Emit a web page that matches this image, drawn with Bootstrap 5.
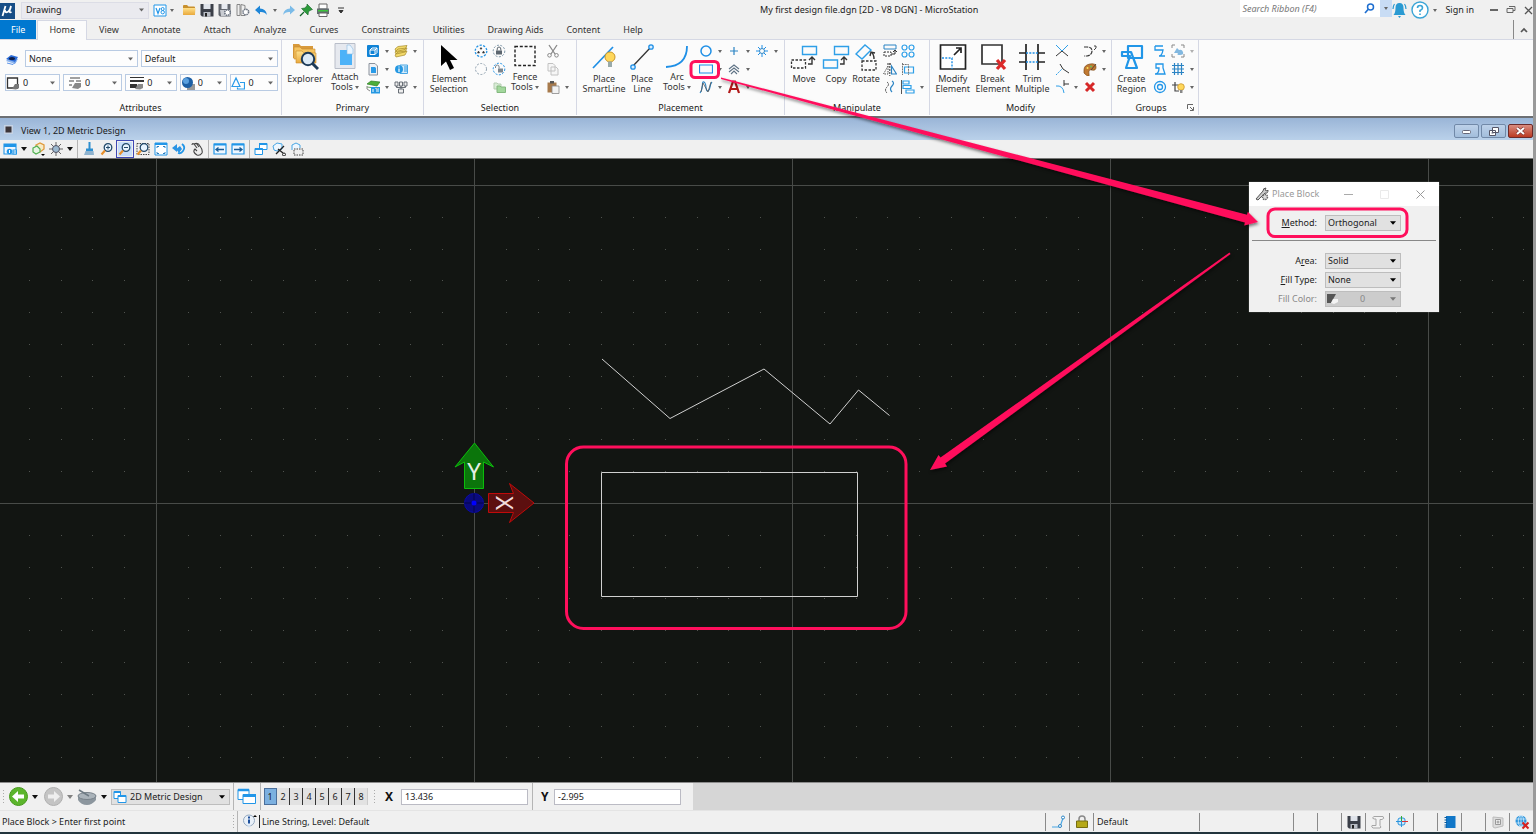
<!DOCTYPE html>
<html lang="en">
<head>
<meta charset="utf-8">
<meta name="viewport" content="width=device-width, initial-scale=1">
<title>My first design file.dgn [2D - V8 DGN] - MicroStation</title>
<link href="https://cdn.jsdelivr.net/npm/bootstrap@5.3.0/dist/css/bootstrap.min.css" rel="stylesheet">
<style>
:root{--line:#d5d8e4}
body{font:9px/10px "Noto Sans","Open Sans",sans-serif;color:#1c1c1c;background:#f0f0f0}
button,select,input{font:inherit;color:inherit;border-radius:0}
button{border:0;background:none;padding:0}
svg{display:block;flex:none;overflow:visible}
.ic{width:14px;height:14px}
.app{border-right:3px solid #9a9a9a;background:#f0f0f0}
.caret{display:inline-block;width:0;height:0;border:2px solid transparent;border-top:3px solid #666;border-bottom:0;vertical-align:middle}
.caret-lg{border-width:3px 3px 0;border-top:4px solid #111}
select{appearance:none;background:no-repeat right 4px center/5px 4px url("data:image/svg+xml,%3Csvg xmlns='http://www.w3.org/2000/svg' viewBox='0 0 5 4'%3E%3Cpath d='M0 .5h5L2.500 3.500z' fill='%23666'/%3E%3C/svg%3E");padding:0 10px 0 3px;border:1px solid #b9cbe3;min-width:0;outline:0}
select:disabled{opacity:1}
.near{margin-left:2px}.near3{margin-inline:3px}.near5{margin-inline:5px}
/* title bar */
.topbar{height:20px}
.topbar select{width:128px;height:17px;border:1px solid #dcdde6;background-color:#eaeaef;padding-left:4px;margin-left:6px}
.doc-title{padding-left:154px}
.find{width:140px;height:17px;background:#fff;margin-top:-3px}
.find input{border:0;background:none;width:124px;font-style:italic;outline:0;padding:0 2px}
.find input::placeholder{color:#777;opacity:1}
.find-drop{width:12px;height:17px;background:#c8dcf4;margin-top:-3px}
.sign{margin-right:12px}
/* tabs */
.tabs{height:20px;border-bottom:1px solid var(--line);gap:1px}
.tabs .nav-link{color:#333;font-size:9px;line-height:19px;height:19px;padding:0 11px;border-radius:0}
.tabs .file{background:#0078d0;color:#fff}
.tabs .active{background:#fbfbfb;border:1px solid var(--line);border-bottom:0;height:20px;line-height:18px}
.collapse-btn{width:20px;border-left:1px solid #888}
/* ribbon */
.ribbon{height:76px;background:#fbfbfb;border-bottom:1px solid #fff}
.grp{border-right:1px solid var(--line);padding:2px 0 1px;display:flex;flex-direction:column;justify-content:space-between}
.grp-label{height:12px;line-height:12px;position:relative}
.big{color:#333;text-align:center;align-self:flex-start;white-space:nowrap}
.big .art{height:32px;display:flex;align-items:center;justify-content:center;padding-bottom:2px}
.big .art svg{width:28px;height:28px}
.big.menu .art{height:30px}
.tg{display:grid;grid-auto-rows:18px;grid-auto-flow:row;place-items:center;height:54px}
.tg button{display:grid;place-items:center}
.c1{grid-template-columns:14px 14px}.c2{grid-template-columns:18px 18px}
.c4{grid-template-columns:repeat(4,14px)}.c6{grid-template-columns:repeat(6,14px)}
.c3{grid-template-columns:18px 17px 12px}
.w30{width:30px}.w34{width:34px}.w40{width:40px}.w46{width:46px}
.attr{padding:8px 3px 0 5px;gap:7px}
.attr select{height:17px;background-color:#fdfdfd}
.attr .tpl{flex:111 0 0;margin-left:3px}.attr .lvl{flex:139 0 0}
.row3{gap:3px}
.pair{border:1px solid #b9cbe3;height:17px;background:#fdfdfd;min-width:0;overflow:hidden}
.pair select{border:0;height:15px;background-color:transparent;width:20px}
.wide{flex:57 0 0}.slim{flex:49 0 0}
.launch{right:4px;top:2px}
/* view window */
.view-bar{height:24px;background:linear-gradient(#9ab5d7,#bad1ea);border-top:2px solid #6c6f73}
.win-btn{width:25px;height:14px;border:1px solid #7189a8;border-radius:2px;background:linear-gradient(#bdd1e9,#a2bddb);display:grid;place-items:center}
.win-btn.shut{background:linear-gradient(#d98d80,#bb3a22);border-color:#6b2a2a}
.view-tools{height:19px;border-bottom:1px solid #777;gap:4px;padding-left:3px}
.view-tools .on{background:#c7defa;outline:1px solid #3f48b5;outline-offset:1px}
.bar{width:1px;align-self:stretch;background:#b5b5b5}
.canvas{background:#121512;min-height:0}
.canvas > svg{width:100%;height:100%;position:absolute}
/* tool settings window */
.dlg{left:1249px;top:23px;width:190px;height:130px;background:#f0f0f0;box-shadow:0 0 1px #888}
.dlg-head{height:24px;background:#fff;color:#999;padding:0 14px 0 6px}
.dlg label{width:68px;text-align:right}
.dlg select,.gray-select{height:16px;width:76px;background-color:#e1e1e1;border:1px solid #bdbdbd;background-image:url("data:image/svg+xml,%3Csvg xmlns='http://www.w3.org/2000/svg' viewBox='0 0 7 4'%3E%3Cpath d='M0 0h7L3.500 4z' fill='%23000'/%3E%3C/svg%3E");background-size:6px 4px;padding-left:2px}
.dlg select:disabled{background-color:#ccc;color:#888;padding-left:34px;background-image:url("data:image/svg+xml,%3Csvg xmlns='http://www.w3.org/2000/svg' viewBox='0 0 7 4'%3E%3Cpath d='M0 0h7L3.500 4z' fill='%23777'/%3E%3C/svg%3E")}
.dlg hr{margin:0 3px 12px;border-color:#888;opacity:1}
.method{height:34px}
.dlg .off{color:#888}
.swatch{left:78px;top:3px}
/* bottom bars */
.nav-bar{height:28px;background:#d6d6d6;border-top:1px solid #8c8c8c}
.nav-part{background:#f0f0f0;height:27px}
.grip{width:3px;height:16px;background:radial-gradient(circle,#aaa 1px,transparent 1px) 0 0/3px 3px}
.nav-part .gray-select{width:119px;padding-left:18px}
.views{background:#e2e2e2;height:17px}
.views button{width:13px;border-right:1px solid #333}
.views button:last-child{border-right-color:#ccc}
.views .sel{background:#7cb0e0;outline:1px solid #4b6f9b;outline-offset:-1px}
.xy{font-size:12px;font-weight:700;color:#111;width:13px}
.nav-part input{width:127px;height:16px;border:1px solid #bbbbc4;background:#fff;padding:0 3px;outline:0}
.status{height:22px;border-top:1px solid #e4e4e4}
.prompt{width:232px;padding-left:2px}
.cell{width:24px;border-left:1px solid #8a8a8a;height:18px;display:grid;place-items:center}
.cell-level{width:106px;padding-left:3px;place-items:center start}
.cell-wide{width:94px}
.base{height:2px;background:#22343c;margin-right:-3px}
.marks{left:0;top:0;width:1536px;height:834px;pointer-events:none;z-index:5}
</style>
</head>
<body>
<svg width="0" height="0" class="position-absolute" aria-hidden="true"><defs>
<linearGradient id="gold" x2="0" y2="1"><stop stop-color="#ffe08a"/><stop offset="1" stop-color="#e9a93c"/></linearGradient>
<g id="lens"><circle cx="8" cy="5.500" r="3.800" fill="#e8f4ff" stroke="#234a6b" stroke-width="1.300"/><path d="M5 8.500 1.500 12.500" stroke="#e8902c" stroke-width="2.200"/></g>
<symbol id="floppy" viewBox="0 0 14 14"><path d="M.5 1h13v12.500H2L.5 12z" fill="#3b3f48"/><path d="M3.500 1h7v5h-7z" fill="#dfe3ea"/><path d="M3.500 9h7v4.500h-7z" fill="#b8bcc4"/><path d="M5 10h2v3.500H5z" fill="#222"/></symbol>
<symbol id="floppy-gear" viewBox="0 0 14 14"><path d="M.5 1h12v12.500H2L.5 12z" fill="#62666e"/><path d="M3.500 1h6v5h-6z" fill="#e7eaf0"/><path d="M2 7h10v6H3z" fill="#c9ccd2"/><circle cx="9.500" cy="9.500" r="2.800" fill="#fff" stroke="#6b7380" stroke-width="1.600" stroke-dasharray="1.500 .7"/></symbol>
<symbol id="docgear" viewBox="0 0 14 14"><path d="M1 1.500h3v11H1zM5 1.500l4 1v10H5z" fill="#eee" stroke="#888"/><circle cx="9.800" cy="9" r="2.800" fill="#fff" stroke="#6b7380" stroke-width="1.600" stroke-dasharray="1.500 .7"/></symbol>
<symbol id="folder" viewBox="0 0 14 14"><path d="M1 3q0-1 1-1h3l1.500 1.500H12q1 0 1 1V11q0 1-1 1H2q-1 0-1-1z" fill="#c8902e"/><path d="M1 5h12.500L13 11q0 1-1 1H2q-1 0-1-1z" fill="url(#gold)"/></symbol>
<symbol id="undo" viewBox="0 0 14 14"><path d="M1 7 6 2.500V5.500Q12 5.500 13 12 10.500 8.500 6 9v2.500z" fill="#1e86d8"/></symbol>
<symbol id="pin" viewBox="0 0 14 14"><path d="M8 1l5.500 5.500-1.500.5-2.500 1.500-.5 3.500L2.500 5.500 6 5 8 2.500z" fill="#2c9a3a" stroke="#14652a" stroke-width=".6"/><path d="M5 9 1 13" stroke="#14652a" stroke-width="1.300"/></symbol>
<symbol id="printer" viewBox="0 0 14 14"><path d="M3 1h8v5H3z" fill="#fff" stroke="#666"/><path d="M1 5.500h12V11H1z" fill="#636d70"/><path d="M2 7h10v1.500H2z" fill="#3cc43c"/><path d="M3 10h8v3.500H3z" fill="#fff" stroke="#666"/></symbol>
<symbol id="layers-blue" viewBox="0 0 14 14"><path d="M1 9l4-4 8 2-3 5z" fill="#8fb6ee"/><path d="M1 7l5-4 7 2-3 5z" fill="#2a6bd8"/><ellipse cx="7" cy="6.500" rx="3" ry="1.600" fill="#0e1e4a"/><path d="M2 11l6 1.500 3-3" fill="none" stroke="#5d94e8"/></symbol>
<symbol id="sq-hand" viewBox="0 0 14 14"><path d="M1.500 2h10v10h-10z" fill="#fff" stroke="#333" stroke-width="1.300"/><path d="M6 13l3-5h4v4l-3 1.500z" fill="#777"/></symbol>
<symbol id="lines-hand" viewBox="0 0 14 14"><path d="M2 2h10M1 5h5m2 0h5M1 9h3" stroke="#444" stroke-width="1.200"/><path d="M4 12l3-5h6v4l-3 2z" fill="#888"/></symbol>
<symbol id="thick-hand" viewBox="0 0 14 14"><path d="M0 1.500h14" stroke="#333"/><path d="M0 5h14" stroke="#333" stroke-width="2"/><path d="M0 10h7" stroke="#333" stroke-width="4"/><path d="M5 13l3-5h5v4l-3 1.500z" fill="#888"/></symbol>
<symbol id="ball" viewBox="0 0 14 14"><path d="M6 8h8v6H6z" fill="#999"/><circle cx="6.500" cy="6.500" r="5.500" fill="#1c5fa5"/><circle cx="5" cy="5" r="3" fill="#5aa0df"/></symbol>
<symbol id="tri-sq" viewBox="0 0 14 14"><path d="M1 10.500 5 2l4 8.500zM9 6.500h4.500V13H6.500v-1.500" fill="none" stroke="#2a9bea" stroke-width="1.200"/></symbol>
<symbol id="explorer" viewBox="0 0 28 28"><path d="M2 1h6l2 2h12v12H2z" fill="#d89a3c"/><path d="M3 4h6l2 2h13v10H3z" fill="#f6c460" stroke="#c98a2e" stroke-width=".6"/><path d="M5 8h6l2 2h12v10H5z" fill="url(#gold)" stroke="#c98a2e" stroke-width=".6"/><circle cx="17" cy="16" r="6.200" fill="#dceaf6" stroke="#1d3a57" stroke-width="2"/><path d="M21.500 20.500 27 26" stroke="#1d3a57" stroke-width="3"/></symbol>
<symbol id="attach" viewBox="0 0 28 28"><path d="M4 1.500h20v25H4z" fill="#e6e9ef" stroke="#b9bec9"/><path d="M9 8h7l5 4v11H9z" fill="#4cb2f8"/><path d="M16 3v9h6V7l-3-4z" fill="#eaf5ff" stroke="#8ab8dd" stroke-width=".6"/></symbol>
<symbol id="cube" viewBox="0 0 14 14"><rect x="1" y="1" width="12" height="12" rx="1" fill="#1083d6"/><path d="M4 6h5v4.500H4zM4 6l2-2h5v4.500l-2 2M9 6l2-2" fill="none" stroke="#fff"/></symbol>
<symbol id="stack" viewBox="0 0 14 14"><path d="M1 11l3-3 9-1-2 4-9 2zM1 8l3-3 9-1-2 4-9 2zM1 5l3-2.500 9-1-2 4-9 2z" fill="#f3da6b" stroke="#a58a2a" stroke-width=".7"/></symbol>
<symbol id="page" viewBox="0 0 14 14"><path d="M3 1.500h6l2.500 2.500v9H3z" fill="#eef1f5" stroke="#8b929c"/><path d="M5 5h4l1 1v5H5z" fill="#2a9be8"/></symbol>
<symbol id="info-box" viewBox="0 0 14 14"><path d="M6 3h7.500v8.500H6z" fill="#d6ecfb" stroke="#48a6e4"/><circle cx="5" cy="7.300" r="4" fill="#2598e2"/><path d="M5 6.500V10M5 4.500v1" stroke="#fff" stroke-width="1.200"/><path d="M10 5h3m-3 2h3m-3 2h3" stroke="#2598e2"/></symbol>
<symbol id="green-info" viewBox="0 0 14 14"><path d="M1 4l4-3 9 1-3 4zM1 7l4 .5" fill="#4cae3a" stroke="#2f7f25" stroke-width=".7"/><path d="M1 6v3l3 2" stroke="#888" fill="none"/><path d="M5 7h9v6.500H5z" fill="#2598e2"/><path d="M7 9v3m3-4v1h3m-3 2h3" stroke="#fff"/></symbol>
<symbol id="tree" viewBox="0 0 14 14"><path d="M1 2h3v4H1zM5.500 2h3v4h-3zM10 2h3v4h-3zM4.500 9h5v4h-5zM2.500 6v1.500h9V6M7 6v3" fill="#eee" stroke="#5a6169" stroke-width=".9"/></symbol>
<symbol id="cursor" viewBox="0 0 28 28"><path d="M6 2v21l5-4.500 4 8.500 4-2-4-8h7.500z" fill="#000"/></symbol>
<symbol id="dotring" viewBox="0 0 14 14"><circle cx="7" cy="7" r="5.800" fill="none" stroke="#2494e6" stroke-width="1.300" stroke-dasharray="2.200 1.400"/><path d="M6 5l1-1.500L8 5zM3.500 9l1-2 1 2zM8.500 9l1-2 1 2z" fill="#333" stroke="#333" stroke-width=".6"/></symbol>
<symbol id="ring" viewBox="0 0 14 14"><circle cx="7" cy="7" r="5.500" fill="none" stroke="#8fa0ae" stroke-dasharray="2 1.500"/></symbol>
<symbol id="lockring" viewBox="0 0 14 14"><circle cx="7" cy="7" r="5.800" fill="none" stroke="#7e97a8" stroke-dasharray="2 1.500"/><path d="M4 6.500h6v4H4z" fill="#5c666f"/><path d="M5.200 6.500V5q0-2 1.800-2t1.800 2v1.500" fill="none" stroke="#5c666f"/></symbol>
<symbol id="unlockring" viewBox="0 0 14 14"><circle cx="7" cy="7" r="5.800" fill="none" stroke="#2494e6" stroke-dasharray="2 1.500"/><path d="M6 6.500h5v4H6z" fill="#7c868f"/><path d="M3.500 6V5q0-2 1.800-2t1.800 2v1.500" fill="none" stroke="#7c868f"/></symbol>
<symbol id="greens" viewBox="0 0 14 14"><path d="M2 3h3l1 1h3v5H2z" fill="#d9ecd6" stroke="#b5cdb2"/><path d="M5 6h3l1 1h4.500v5.500H5z" fill="#a2d79c" stroke="#83b87e"/></symbol>
<symbol id="fence" viewBox="0 0 28 28"><path d="M4 4.500h20v19H4z" fill="none" stroke="#222" stroke-width="1.400" stroke-dasharray="3 1.800"/></symbol>
<symbol id="cut" viewBox="0 0 14 14"><path d="M3 1l6 9M11 1 5 10" stroke="#888" stroke-width="1.300"/><circle cx="3.500" cy="11.300" r="1.800" fill="none" stroke="#888"/><circle cx="10.500" cy="11.300" r="1.800" fill="none" stroke="#888"/></symbol>
<symbol id="copy" viewBox="0 0 14 14"><path d="M2 1.500h5l2 2V9H2zM5 5h5l2 2v6H5z" fill="#f6f6f6" stroke="#c2c2c2"/></symbol>
<symbol id="paste" viewBox="0 0 14 14"><path d="M1.500 2.500h9v10h-9z" fill="#a77a4c"/><path d="M4 1h4v2.500H4z" fill="#555"/><path d="M6 6h7v7.500H6z" fill="#f2f2f2" stroke="#888" stroke-width=".8"/></symbol>
<symbol id="smartline" viewBox="0 0 28 28"><path d="M3 25 23 4" stroke="#1e8fe6" stroke-width="1.700"/><circle cx="20" cy="14" r="5" fill="#ffd75a" stroke="#c9962a"/><path d="M18 18.500h4V24h-4z" fill="#9aa"/></symbol>
<symbol id="pline" viewBox="0 0 28 28"><path d="M5 23 23 4" stroke="#333" stroke-width="1.300"/><circle cx="5" cy="24" r="2.200" fill="#d8edff" stroke="#1e8fe6" stroke-width="1.300"/><circle cx="23" cy="4" r="2.200" fill="#d8edff" stroke="#1e8fe6" stroke-width="1.300"/></symbol>
<symbol id="arc" viewBox="0 0 28 28"><path d="M3 25Q24 24 24 4" fill="none" stroke="#1e8fe6" stroke-width="1.800"/></symbol>
<symbol id="circ" viewBox="0 0 14 14"><circle cx="7" cy="7" r="5" fill="none" stroke="#1e8fe6" stroke-width="1.500"/></symbol>
<symbol id="plus" viewBox="0 0 14 14"><path d="M3 7h8M7 3v8" stroke="#2b84c4" stroke-width="1.200"/></symbol>
<symbol id="sun" viewBox="0 0 14 14"><circle cx="7" cy="7" r="2.500" fill="none" stroke="#2b84c4"/><path d="M7 1v3M7 10v3M1 7h3M10 7h3M3 3l2 2M9 9l2 2M3 11l2-2M9 5l2-2" stroke="#1e8fe6"/></symbol>
<symbol id="block" viewBox="0 0 14 14"><path d="M.5 3h13v8H.5z" fill="none" stroke="#1e8fe6" stroke-width="1.200"/></symbol>
<symbol id="multi" viewBox="0 0 14 14"><path d="M2 7l5-4 5 4M2 10l5-4 5 4M4 12l3-3 3 3" fill="none" stroke="#5f7386" stroke-width="1.100"/></symbol>
<symbol id="curve" viewBox="0 0 14 14"><path d="M1 13C5 8 2 1 5 2s1 10 4 9 1-6 4-9" fill="none" stroke="#2b84c4" stroke-width="1.100"/><path d="M2 12 4 3l5 9 3-10" fill="none" stroke="#555" stroke-width=".8"/></symbol>
<symbol id="text-a" viewBox="0 0 14 14"><path d="M2 13 6 1.500h2L12 13M4 9h6" fill="none" stroke="#b11a1a" stroke-width="2.200"/></symbol>
<symbol id="move" viewBox="0 0 28 28"><path d="M12.500 3.500h14v8h-14z" fill="none" stroke="#2e9fe8" stroke-width="1.400"/><path d="M1.500 17h14v8h-14z" fill="none" stroke="#333" stroke-width="1.300" stroke-dasharray="2.500 1.500"/><path d="M18 21h4v-7m-3 3 3-3 3 3" fill="none" stroke="#333" stroke-width="1.400"/></symbol>
<symbol id="copy-el" viewBox="0 0 28 28"><path d="M12.500 3.500h14v8h-14zM1.500 17h14v8h-14z" fill="none" stroke="#2e9fe8" stroke-width="1.400"/><path d="M18 21h4v-7m-3 3 3-3 3 3" fill="none" stroke="#333" stroke-width="1.400"/></symbol>
<symbol id="rotate" viewBox="0 0 28 28"><path d="M4 11l9-9 6 5-9 9z" fill="none" stroke="#2e9fe8" stroke-width="1.400"/><path d="M10 18h14v9H10z" fill="none" stroke="#333" stroke-width="1.300" stroke-dasharray="2.500 1.500"/><path d="M22 16q0-5-3-7m-1 4 1-4 4 1" fill="none" stroke="#333" stroke-width="1.400"/></symbol>
<symbol id="m1" viewBox="0 0 14 14"><path d="M1 1h12v4H1z" fill="none" stroke="#2b84c4"/><path d="M1 8h7v4H1z" fill="none" stroke="#333" stroke-dasharray="2 1"/><path d="M8 10h4V6m-2 2 2-2 2 2" fill="none" stroke="#333"/></symbol>
<symbol id="m2" viewBox="0 0 14 14"><g fill="none" stroke="#2e9fe8" stroke-width="1.200"><circle cx="3.500" cy="3.500" r="2.500"/><circle cx="10.500" cy="3.500" r="2.500"/><circle cx="3.500" cy="10.500" r="2.500"/><circle cx="10.500" cy="10.500" r="2.500"/></g></symbol>
<symbol id="m3" viewBox="0 0 14 14"><path d="M5 4v8H.5z" fill="none" stroke="#555" stroke-dasharray="1.500 1"/><path d="M8.500 4v8H13.500z" fill="none" stroke="#2b84c4" stroke-width="1.200"/><path d="M4 2h4M6.800 1v13" stroke="#333" stroke-dasharray="2 1"/></symbol>
<symbol id="m4" viewBox="0 0 14 14"><path d="M3.500 5h9v6h-9z" fill="none" stroke="#2e9fe8" stroke-width="1.200"/><path d="M1.500 1v12M1 2.500h6.500V13" fill="none" stroke="#777" stroke-dasharray="2 .7"/></symbol>
<symbol id="m5" viewBox="0 0 14 14"><path d="M4 2q3 2 0 5t0 6" fill="none" stroke="#555" stroke-dasharray="2 .7"/><path d="M9 1q3 2 0 5t0 6" fill="none" stroke="#2b84c4" stroke-width="1.200"/></symbol>
<symbol id="m6" viewBox="0 0 14 14"><path d="M2 1h6v3H2zM2 5.500h8v3H2zM5 10h8v3H5z" fill="none" stroke="#2e9fe8" stroke-width="1.200"/><path d="M.5 0v14" stroke="#555"/></symbol>
<symbol id="modify" viewBox="0 0 28 28"><path d="M1.500 2h25v24h-25z" fill="#fff" stroke="#222" stroke-width="1.700"/><path d="M3 15h10v11" fill="none" stroke="#1e8fe6" stroke-width="1.400" stroke-dasharray="2 1.300"/><path d="M15 12l7-7m-5 0h5v5" fill="none" stroke="#222" stroke-width="1.700"/></symbol>
<symbol id="break" viewBox="0 0 28 28"><path d="M3 2h20v19H3z" fill="#fff" stroke="#333" stroke-width="1.700"/><path d="M18 17l8 9m0-9-8 9" stroke="#dd2a2a" stroke-width="3.200"/></symbol>
<symbol id="trim" viewBox="0 0 28 28"><path d="M8 1v26M20 1v26M1 10h7M1 19h7M20 10h7M20 19h7" stroke="#222" stroke-width="1.700"/><path d="M8 10h12M8 19h12" stroke="#1e8fe6" stroke-width="1.700" stroke-dasharray="2 1.300"/></symbol>
<symbol id="x1" viewBox="0 0 14 14"><path d="M1 12 7 7l6 5" fill="none" stroke="#333"/><path d="M1 1l6 6 6-6" fill="none" stroke="#2e9fe8"/></symbol>
<symbol id="x2" viewBox="0 0 14 14"><path d="M1 13l6-6" stroke="#2e9fe8" stroke-dasharray="2 1"/><path d="M5 2l3 5 6 4" fill="none" stroke="#333"/></symbol>
<symbol id="x3" viewBox="0 0 14 14"><path d="M1 6q7-1 8 7" fill="none" stroke="#2e9fe8"/><path d="M9 0v6M9 4h5" stroke="#333"/></symbol>
<symbol id="y1" viewBox="0 0 14 14"><path d="M1 3h3q5 0 5 4t-5 5H1" fill="none" stroke="#333" stroke-width="1.200" stroke-dasharray="4 1"/><path d="M11 2h2v2l-2 2" fill="none" stroke="#444"/></symbol>
<symbol id="palette" viewBox="0 0 14 14"><path d="M1 8q0-5 6-6t6 3-4 3-3 4-5-1z" fill="#c17a32" stroke="#7c4a18" stroke-width=".7"/><circle cx="4.500" cy="6" r="1" fill="#ffe45a"/><circle cx="8" cy="4.500" r="1" fill="#62c162"/><path d="M8 8l5-6" stroke="#543"/></symbol>
<symbol id="del" viewBox="0 0 14 14"><path d="M3 3l8 8m0-8-8 8" stroke="#d62828" stroke-width="3"/></symbol>
<symbol id="region" viewBox="0 0 28 28"><path d="M10 3h14v12H10zM4 9h9l6 16H8l4-12H4z" fill="none" stroke="#2196e8" stroke-width="2.200" stroke-linejoin="round"/></symbol>
<symbol id="g1" viewBox="0 0 14 14"><path d="M2 2h8M2 2v4h8q-1 6-4 6h6" fill="none" stroke="#2196e8" stroke-width="1.300"/></symbol>
<symbol id="g2" viewBox="0 0 14 14"><path d="M3 2h7v4l2 6H2q4 0 4-6H3z" fill="none" stroke="#2196e8" stroke-width="1.300"/></symbol>
<symbol id="g3" viewBox="0 0 14 14"><circle cx="7" cy="7" r="5.500" fill="none" stroke="#2196e8" stroke-width="1.300"/><circle cx="7" cy="7" r="2.500" fill="none" stroke="#2196e8" stroke-width="1.300"/></symbol>
<symbol id="h1" viewBox="0 0 14 14"><path d="M1 4V1h3M10 1h3v3M13 10v3h-3M4 13H1v-3" fill="none" stroke="#888"/><path d="M3 9l3-5 2 2q3-1 4 2t-3 3-2-2z" fill="#82b8e0"/></symbol>
<symbol id="h2" viewBox="0 0 14 14"><path d="M3.500 1v12M7 1v12M10.500 1v12M1 3.500h12M1 7h12M1 10.500h12" stroke="#2b84c4" stroke-width="1.200"/></symbol>
<symbol id="h3" viewBox="0 0 14 14"><path d="M4 2v9h4M1 5h6" fill="none" stroke="#444" stroke-width="1.200"/><circle cx="10" cy="7" r="3.300" fill="#ffd75a" stroke="#c9962a" stroke-width=".8"/><path d="M9 10h2.500v3H9z" fill="#888"/></symbol>
<symbol id="win" viewBox="0 0 14 14"><path d="M1 2h12v10H1z" fill="#eef7ff" stroke="#2196e8" stroke-width="1.100"/><path d="M1 2h12v3H1z" fill="#2196e8"/></symbol>
<symbol id="v1" viewBox="0 0 14 14"><use href="#win" width="14" height="14"/><circle cx="6.500" cy="9.500" r="2.800" fill="#2196e8"/><path d="M9.500 7.500H14v5H9.500z" fill="#2196e8"/><path d="M6.500 8v3M10.500 9h2.500m-2.500 2H13" stroke="#fff"/></symbol>
<symbol id="v2" viewBox="0 0 14 14"><path d="M5 3l4-2 4 2v4l-4 3-4-3z" fill="#f7ebc7" stroke="#e09a3c" stroke-width="1.300"/><path d="M2 6l4-2 3 3v3l-4 2-3-2z" fill="#e6f5e2" stroke="#50b050" stroke-width="1.200"/><path d="M10 12h4l-2 2z" fill="#000"/></symbol>
<symbol id="v3" viewBox="0 0 14 14"><path d="M7 0v14M0 7h14M2 2l10 10M2 12 12 2" stroke="#666"/><circle cx="7" cy="7" r="3.500" fill="#9bb8cf" stroke="#556"/></symbol>
<symbol id="brush" viewBox="0 0 14 14"><path d="M6.500 0h2v7h-2z" fill="#2d8fd0"/><path d="M4 6.500h7V9H4z" fill="#2d8fd0"/><path d="M3.500 9h8l.5 4H2z" fill="#8fb3cf"/></symbol>
<symbol id="zin" viewBox="0 0 14 14"><use href="#lens"/><path d="M6 5.500h4M8 3.500v4" stroke="#234a6b"/></symbol>
<symbol id="zout" viewBox="0 0 14 14"><use href="#lens"/><path d="M6 5.500h4" stroke="#234a6b"/></symbol>
<symbol id="zwin" viewBox="0 0 14 14"><path d="M1 1.500h12v11H1z" fill="none" stroke="#444" stroke-dasharray="1.500 1"/><use href="#lens"/></symbol>
<symbol id="fit" viewBox="0 0 14 14"><path d="M1 1h12v12H1z" fill="#fff" stroke="#2196e8"/><path d="M1 1h12v2H1z" fill="#2196e8"/><path d="M3 6V4.500h2M9 4.500h2V6M3 10v1.500h2M9 11.500h2V10" stroke="#2b7fc0" fill="none"/></symbol>
<symbol id="rot" viewBox="0 0 14 14"><path d="M10 2q4 3 1 7-2 3-5 2" fill="none" stroke="#2196e8" stroke-width="1.800"/><path d="M0 6l5-4v8zM4 7l4-3 2 3-3 4z" fill="#2b94e4"/></symbol>
<symbol id="hand" viewBox="0 0 14 14"><path d="M2 3q0-2 2-1 4-2 6 2 3 4 2 7-2 3-5 2-5-3-2-6 1 1 2 2M4 2l3 4M6.500 1.500 9 5" fill="#eee" stroke="#444" stroke-width="1.100"/></symbol>
<symbol id="prev" viewBox="0 0 14 14"><path d="M1 2h12v10H1z" fill="#eef7ff" stroke="#2196e8" stroke-width="1.200"/><path d="M1 2.500h12" stroke="#2196e8" stroke-width="2"/><path d="M3 7.500h8M5.500 5.500l-2.500 2 2.500 2" stroke="#1a5c96" fill="none" stroke-width="1.300"/></symbol>
<symbol id="next" viewBox="0 0 14 14"><path d="M1 2h12v10H1z" fill="#eef7ff" stroke="#2196e8" stroke-width="1.200"/><path d="M1 2.500h12" stroke="#2196e8" stroke-width="2"/><path d="M3 7.500h8M8.500 5.500l2.500 2-2.500 2" stroke="#1a5c96" fill="none" stroke-width="1.300"/></symbol>
<symbol id="wins" viewBox="0 0 14 14"><path d="M5.500 1.500H13v6H5.500z" fill="#fff" stroke="#2196e8"/><path d="M5 2h8" stroke="#2196e8" stroke-width="2"/><path d="M1 6.500h7.500v6H1z" fill="#fff" stroke="#2196e8"/><path d="M1 7h7.500" stroke="#2196e8" stroke-width="2"/></symbol>
<symbol id="wins2" viewBox="0 0 14 14"><path d="M1 1.500h6.500v7H1z" fill="#fff" stroke="#2196e8"/><path d="M1 2h6.500" stroke="#2196e8" stroke-width="2"/><path d="M5 5.500h8v7H5z" fill="#fff" stroke="#2196e8"/><path d="M5 6h8" stroke="#2196e8" stroke-width="2"/></symbol>
<symbol id="clip" viewBox="0 0 14 14"><path d="M1 4l4-3 5 1v5L5 9 2 8z" fill="#eef7ff" stroke="#48a6e4"/><path d="M4 12 12 4M6 7l5 4" stroke="#222" stroke-width="1.300"/><circle cx="12" cy="12.500" r="1.500" fill="none" stroke="#222"/></symbol>
<symbol id="clip2" viewBox="0 0 14 14"><path d="M2 8V3l4-2 4 2v3" fill="#eef7ff" stroke="#48a6e4"/><path d="M4 7h9v6H4z" fill="none" stroke="#444" stroke-dasharray="1.500 1"/></symbol>
<symbol id="tier" viewBox="0 0 20 18"><path d="M1 1.500h11v10H1z" fill="#fff" stroke="#2196e8"/><path d="M1 2h11" stroke="#2196e8" stroke-width="2.500"/><path d="M6 6.500h12.500v9H6z" fill="#fff" stroke="#2196e8"/><path d="M6 7.500h13" stroke="#2196e8" stroke-width="3"/></symbol>
</defs></svg>

<div class="app vh-100 d-flex flex-column position-relative overflow-hidden">
<header>
  <div class="topbar d-flex align-items-center">
    <svg width="15" height="17" viewBox="0 0 15 17"><path d="M0 1h15v16H0z" fill="#164d86"/><path d="M2.500 14 5.500 4M5 8q0 3 2.500 2T11 4l-1.500 5q0 2 2 1" fill="none" stroke="#fff" stroke-width="1.800"/></svg>
    <select aria-label="Workflow"><option>Drawing</option></select>
    <button class="ms-1" aria-label="V8"><svg class="ic" viewBox="0 0 14 14"><path d="M1 2h12v11H1z" fill="#fff" stroke="#2196e8"/><path d="M3 5l2 5.500L7 5" fill="none" stroke="#2196e8" stroke-width="1.200"/><circle cx="9.700" cy="6" r="1.500" fill="none" stroke="#2196e8"/><circle cx="9.700" cy="9.200" r="1.700" fill="none" stroke="#2196e8"/></svg></button>
    <i class="caret near3 me-2"></i>
    <button aria-label="Open"><svg class="ic"><use href="#folder"/></svg></button>
    <button class="ms-1" aria-label="Save"><svg class="ic"><use href="#floppy"/></svg></button>
    <button class="ms-1" aria-label="Save settings"><svg class="ic"><use href="#floppy-gear"/></svg></button>
    <button class="ms-1" aria-label="Compress"><svg class="ic"><use href="#docgear"/></svg></button>
    <button class="ms-1" aria-label="Undo"><svg class="ic"><use href="#undo"/></svg></button>
    <i class="caret near5"></i>
    <button aria-label="Redo"><svg class="ic" viewBox="0 0 14 14"><path d="M13 7 8 2.500V5.500Q2 5.500 1 12 3.500 8.500 8 9v2.500z" fill="#7bbbe8"/></svg></button>
    <button class="near3" aria-label="Pin"><svg class="ic"><use href="#pin"/></svg></button>
    <button aria-label="Print"><svg class="ic"><use href="#printer"/></svg></button>
    <svg class="ms-2" width="6" height="7" viewBox="0 0 6 7"><path d="M0 1h6M1 3.500h4L3 6z" fill="#333" stroke="#333"/></svg>
    <div class="doc-title flex-grow-1 text-center text-nowrap">My first design file.dgn [2D - V8 DGN] - MicroStation</div>
    <div class="find d-flex align-items-center"><input aria-label="Search Ribbon" placeholder="Search Ribbon (F4)"><svg width="11" height="11" viewBox="0 0 11 11"><circle cx="6.500" cy="4" r="3" fill="none" stroke="#1f6fd0" stroke-width="1.500"/><path d="M4.500 6 1 10" stroke="#1f6fd0" stroke-width="1.700"/></svg></div>
    <button class="find-drop" aria-label="Search options"><i class="caret d-block mx-auto"></i></button>
    <button aria-label="Notifications"><svg width="15" height="16" viewBox="0 0 15 16"><path d="M7.500 1Q11.500 1 11.500 6q0 5 2 7H1.500q2-2 2-7 0-5 4-5zM6 14h3l-1.500 2z" fill="#2a9ad2"/><path d="M2.500 2Q1 4 1 7M12.500 2Q14 4 14 7" fill="none" stroke="#2a9ad2" stroke-width="1.200"/></svg></button>
    <button class="ms-1" aria-label="Help"><svg width="18" height="18" viewBox="0 0 18 18"><circle cx="9" cy="9" r="8" fill="#fff" stroke="#3aa4d6" stroke-width="1.400"/><path d="M6.500 7q0-2.500 2.500-2.500T11.500 7Q11.500 8.500 9 9.500V11M9 12.500v1.500" fill="none" stroke="#3aa4d6" stroke-width="1.600"/></svg></button>
    <i class="caret ms-1 me-2"></i>
    <a href="#" class="sign text-reset text-decoration-none text-nowrap">Sign in</a>
    <button class="ms-1" aria-label="Minimize"><svg width="8" height="10"><path d="M0 5h8" stroke="#666" stroke-width="2"/></svg></button>
    <button class="ms-2" aria-label="Restore"><svg width="10" height="10" viewBox="0 0 10 10"><path d="M3 1.500h6v4H7M1 3.500h6v4H1z" fill="none" stroke="#666"/></svg></button>
    <button class="ms-2" aria-label="Close"><svg width="9" height="9" viewBox="0 0 9 9"><path d="M1 1l7 7m0-7-7 7" stroke="#555" stroke-width="1.300"/></svg></button>
  </div>
  <nav class="tabs nav flex-nowrap" aria-label="Ribbon tabs">
    <a class="nav-link file" href="#">File</a><a class="nav-link active" href="#">Home</a><a class="nav-link" href="#">View</a><a class="nav-link" href="#">Annotate</a><a class="nav-link" href="#">Attach</a><a class="nav-link" href="#">Analyze</a><a class="nav-link" href="#">Curves</a><a class="nav-link" href="#">Constraints</a><a class="nav-link" href="#">Utilities</a><a class="nav-link text-nowrap" href="#">Drawing Aids</a><a class="nav-link" href="#">Content</a><a class="nav-link" href="#">Help</a>
    <button class="collapse-btn ms-auto" aria-label="Collapse ribbon"><svg class="mx-auto" width="8" height="6" viewBox="0 0 8 6"><path d="M1 5l3-3 3 3" fill="none" stroke="#555" stroke-width="1.700"/></svg></button>
  </nav>
</header>

<section class="ribbon d-flex text-nowrap" aria-label="Home">
  <div class="grp" style="width:282px">
    <div class="attr d-flex flex-column">
      <div class="d-flex align-items-center row3"><svg class="ic"><use href="#layers-blue"/></svg><select aria-label="Template" class="tpl"><option>None</option></select><select aria-label="Level" class="lvl"><option>Default</option></select></div>
      <div class="d-flex row3">
        <label class="pair wide d-flex align-items-center near-in"><svg class="ic"><use href="#sq-hand"/></svg><select class="flex-grow-1" aria-label="Color"><option>0</option></select></label>
        <label class="pair wide d-flex align-items-center ps-1"><svg class="ic"><use href="#lines-hand"/></svg><select class="flex-grow-1" aria-label="Line style"><option>0</option></select></label>
        <label class="pair slim d-flex align-items-center ps-1"><svg class="ic"><use href="#thick-hand"/></svg><select class="flex-grow-1" aria-label="Weight"><option>0</option></select></label>
        <label class="pair slim d-flex align-items-center"><svg class="ic"><use href="#ball"/></svg><select class="flex-grow-1" aria-label="Transparency"><option>0</option></select></label>
        <label class="pair slim d-flex align-items-center"><svg class="ic"><use href="#tri-sq"/></svg><select class="flex-grow-1" aria-label="Priority"><option>0</option></select></label>
      </div>
    </div>
    <div class="grp-label text-center">Attributes</div>
  </div>

  <div class="grp" style="width:142px">
    <div class="d-flex">
      <button class="big w46"><span class="art"><svg><use href="#explorer"/></svg></span>Explorer</button>
      <button class="big menu w34"><span class="art"><svg><use href="#attach"/></svg></span>Attach<br>Tools <i class="caret"></i></button>
      <div class="tg c4 ms-1">
        <button aria-label="Models"><svg class="ic"><use href="#cube"/></svg></button><i class="caret"></i><button aria-label="Levels"><svg class="ic"><use href="#stack"/></svg></button><i class="caret"></i>
        <button aria-label="References"><svg class="ic"><use href="#page"/></svg></button><i class="caret"></i><button aria-label="Properties"><svg class="ic"><use href="#info-box"/></svg></button><span></span>
        <button aria-label="Level display"><svg class="ic"><use href="#green-info"/></svg></button><i class="caret"></i><button aria-label="Key-in"><svg class="ic"><use href="#tree"/></svg></button><i class="caret"></i>
      </div>
    </div>
    <div class="grp-label text-center">Primary</div>
  </div>

  <div class="grp" style="width:153px">
    <div class="d-flex">
      <button class="big w46 near"><span class="art"><svg><use href="#cursor"/></svg></span>Element<br>Selection</button>
      <div class="tg c2">
        <button aria-label="Select all"><svg class="ic"><use href="#dotring"/></svg></button><button aria-label="Lock"><svg class="ic"><use href="#lockring"/></svg></button>
        <button aria-label="Select none"><svg class="ic"><use href="#ring"/></svg></button><button aria-label="Unlock"><svg class="ic"><use href="#unlockring"/></svg></button>
        <span></span><button aria-label="Display sets"><svg class="ic"><use href="#greens"/></svg></button>
      </div>
      <button class="big menu w34"><span class="art"><svg><use href="#fence"/></svg></span>Fence<br>Tools <i class="caret"></i></button>
      <div class="tg c1 ms-1">
        <button aria-label="Cut"><svg class="ic"><use href="#cut"/></svg></button><span></span>
        <button aria-label="Copy to clipboard"><svg class="ic"><use href="#copy"/></svg></button><span></span>
        <button aria-label="Paste"><svg class="ic"><use href="#paste"/></svg></button><i class="caret"></i>
      </div>
    </div>
    <div class="grp-label text-center">Selection</div>
  </div>

  <div class="grp" style="width:208px">
    <div class="d-flex">
      <button class="big w46 ms-1"><span class="art"><svg><use href="#smartline"/></svg></span>Place<br>SmartLine</button>
      <button class="big w30"><span class="art"><svg><use href="#pline"/></svg></span>Place<br>Line</button>
      <button class="big menu w40"><span class="art"><svg><use href="#arc"/></svg></span>Arc<br>Tools <i class="caret"></i></button>
      <div class="tg c6 near">
        <button aria-label="Circle"><svg class="ic"><use href="#circ"/></svg></button><i class="caret"></i><button aria-label="Point"><svg class="ic"><use href="#plus"/></svg></button><i class="caret"></i><button aria-label="Cell"><svg class="ic"><use href="#sun"/></svg></button><i class="caret"></i>
        <button aria-label="Place Block"><svg class="ic"><use href="#block"/></svg></button><i class="caret"></i><button aria-label="Multi-line"><svg class="ic"><use href="#multi"/></svg></button><i class="caret"></i><span></span><span></span>
        <button aria-label="Curve"><svg class="ic"><use href="#curve"/></svg></button><i class="caret"></i><button aria-label="Text"><svg class="ic"><use href="#text-a"/></svg></button><i class="caret"></i>
      </div>
    </div>
    <div class="grp-label text-center">Placement</div>
  </div>

  <div class="grp" style="width:145px">
    <div class="d-flex">
      <button class="big w34 near"><span class="art"><svg><use href="#move"/></svg></span>Move</button>
      <button class="big w30"><span class="art"><svg><use href="#copy-el"/></svg></span>Copy</button>
      <button class="big w30"><span class="art"><svg><use href="#rotate"/></svg></span>Rotate</button>
      <div class="tg c3">
        <button aria-label="Scale"><svg class="ic"><use href="#m1"/></svg></button><button aria-label="Array"><svg class="ic"><use href="#m2"/></svg></button><span></span>
        <button aria-label="Mirror"><svg class="ic"><use href="#m3"/></svg></button><button aria-label="Align"><svg class="ic"><use href="#m4"/></svg></button><span></span>
        <button aria-label="Move parallel"><svg class="ic"><use href="#m5"/></svg></button><button aria-label="Align edges"><svg class="ic"><use href="#m6"/></svg></button><i class="caret"></i>
      </div>
    </div>
    <div class="grp-label text-center">Manipulate</div>
  </div>

  <div class="grp" style="width:182px">
    <div class="d-flex">
      <button class="big w46"><span class="art"><svg><use href="#modify"/></svg></span>Modify<br>Element</button>
      <button class="big w34"><span class="art"><svg><use href="#break"/></svg></span>Break<br>Element</button>
      <button class="big w46"><span class="art"><svg><use href="#trim"/></svg></span>Trim<br>Multiple</button>
      <div class="tg c4">
        <button aria-label="Trim"><svg class="ic"><use href="#x1"/></svg></button><span></span><button aria-label="Extend"><svg class="ic"><use href="#y1"/></svg></button><i class="caret"></i>
        <button aria-label="Trim to element"><svg class="ic"><use href="#x2"/></svg></button><span></span><button aria-label="Change attributes"><svg class="ic"><use href="#palette"/></svg></button><i class="caret"></i>
        <button aria-label="Fillet"><svg class="ic"><use href="#x3"/></svg></button><i class="caret"></i><button aria-label="Delete"><svg class="ic"><use href="#del"/></svg></button>
      </div>
    </div>
    <div class="grp-label text-center">Modify</div>
  </div>

  <div class="grp" style="width:87px">
    <div class="d-flex">
      <button class="big w40"><span class="art"><svg><use href="#region"/></svg></span>Create<br>Region</button>
      <div class="tg c3">
        <button aria-label="Chain"><svg class="ic"><use href="#g1"/></svg></button><button aria-label="Group"><svg class="ic"><use href="#h1"/></svg></button><i class="caret opacity-50"></i>
        <button aria-label="Shape"><svg class="ic"><use href="#g2"/></svg></button><button aria-label="Pattern"><svg class="ic"><use href="#h2"/></svg></button><i class="caret"></i>
        <button aria-label="Hole"><svg class="ic"><use href="#g3"/></svg></button><button aria-label="Drop"><svg class="ic"><use href="#h3"/></svg></button><i class="caret"></i>
      </div>
    </div>
    <div class="grp-label text-center pe-2">Groups<button class="launch position-absolute" aria-label="Groups settings"><svg width="7" height="7" viewBox="0 0 7 7"><path d="M.5 5V.5H6M3 3l3 3M6.500 3v3.500H3" fill="none" stroke="#666"/></svg></button></div>
  </div>
</section>

<section class="d-flex flex-column flex-grow-1 overflow-hidden" aria-label="View 1">
  <div class="view-bar d-flex align-items-center">
    <svg class="ms-1" width="9" height="9" viewBox="0 0 9 9"><path d="M0 0h9v9H0z" fill="#c5d2e4"/><path d="M1.500 1.500h6v6h-6z" fill="#3c3538"/></svg>
    <span class="ms-2 flex-grow-1 mt-1">View 1, 2D Metric Design</span>
    <div class="d-flex mt-1" style="gap:2px">
      <button class="win-btn" aria-label="Minimize view"><svg width="9" height="5"><rect x=".5" y="1.500" width="8" height="3" rx="1" fill="#fff" stroke="#667"/></svg></button>
      <button class="win-btn" aria-label="Restore view"><svg width="10" height="9" viewBox="0 0 10 9"><path d="M3.500.5h6v5h-6zM.5 3.500h6v5h-6z" fill="#fff" stroke="#556"/><path d="M2.500 5.500h2v1h-2z" fill="#556"/></svg></button>
      <button class="win-btn shut" aria-label="Close view"><svg width="9" height="8" viewBox="0 0 9 8"><path d="M1 1l7 6m0-6L1 7" stroke="#733" stroke-width="3"/><path d="M1 1l7 6m0-6L1 7" stroke="#fff" stroke-width="2"/></svg></button>
    </div>
  </div>
  <div class="view-tools d-flex align-items-center">
    <button aria-label="View attributes"><svg class="ic"><use href="#v1"/></svg></button><i class="caret caret-lg"></i>
    <button aria-label="Display style"><svg class="ic"><use href="#v2"/></svg></button><button aria-label="Brightness"><svg class="ic"><use href="#v3"/></svg></button><i class="caret caret-lg"></i>
    <span class="bar"></span>
    <button aria-label="Update view"><svg class="ic"><use href="#brush"/></svg></button><button aria-label="Zoom in"><svg class="ic"><use href="#zin"/></svg></button><button class="on" aria-label="Zoom out"><svg class="ic"><use href="#zout"/></svg></button><button aria-label="Window area"><svg class="ic"><use href="#zwin"/></svg></button><button aria-label="Fit view"><svg class="ic"><use href="#fit"/></svg></button><button aria-label="Rotate view"><svg class="ic"><use href="#rot"/></svg></button><button aria-label="Pan view"><svg class="ic"><use href="#hand"/></svg></button>
    <span class="bar"></span>
    <button aria-label="View previous"><svg class="ic"><use href="#prev"/></svg></button><button aria-label="View next"><svg class="ic"><use href="#next"/></svg></button>
    <span class="bar"></span>
    <button aria-label="Copy view"><svg class="ic"><use href="#wins"/></svg></button><button aria-label="Clip volume"><svg class="ic"><use href="#clip"/></svg></button><button aria-label="Clip mask"><svg class="ic"><use href="#clip2"/></svg></button>
  </div>

  <main class="canvas flex-grow-1 position-relative overflow-hidden">
    <svg aria-label="Drawing">
      <path id="dots" fill="#50534f"/>
      <path id="axes" stroke="#484b48" shape-rendering="crispEdges"/>
      <g fill="none" stroke="#d0d0d0"><path d="M602 200l68 59.500 94-49.500 66 55 28.500-34 31 25.500"/><path d="M601.500 313.500h256v124h-256z"/></g>
      <circle cx="474" cy="344" r="9.500" fill="#0a0a7c" stroke="#0a0aa8"/><path d="M464 344h20M474 334v20" stroke="#05054a"/><circle cx="474" cy="344" r="2.500" fill="#00f"/>
      <path d="M474.500 284l19 24-10-5v26.500h-19V303l-9.500 5z" fill="#0b750b" stroke="#0bbd0b"/>
      <path d="M488.500 334.500h25l-4-10 24.500 19.500-24.500 19.500 4-10h-25z" fill="#5c0f0f" stroke="#c00a0a"/>
      <text x="474" y="321" text-anchor="middle" font-size="24" fill="#e3efe3">Y</text>
      <text x="505" y="353" text-anchor="middle" transform="rotate(90 505 344)" font-size="24" fill="#f0dcdc">X</text>
    </svg>

    <div class="dlg position-absolute" role="dialog" aria-label="Place Block">
      <div class="dlg-head d-flex align-items-center"><svg class="ic" viewBox="0 0 14 14"><path d="M1 12 8 4q0-3 3-3l-1 2 2 1 1-1q0 4-3 3L3 13z" fill="#ccc" stroke="#555"/><circle cx="10" cy="10" r="2.500" fill="#ddd" stroke="#666" stroke-width="1.500" stroke-dasharray="1.500 .7"/></svg><span class="near3 flex-grow-1 text-nowrap">Place Block</span>
        <button aria-label="Minimize"><svg width="9" height="9"><path d="M0 4.500h9" stroke="#aaa"/></svg></button>
        <button class="mx-4" aria-label="Maximize"><svg class="near3" width="9" height="9"><path d="M.5.5h8v8h-8z" fill="none" stroke="#eaeaea"/></svg></button>
        <button aria-label="Close"><svg width="9" height="9"><path d="M.5.5l8 8m0-8-8 8" stroke="#999"/></svg></button></div>
      <div class="method d-flex align-items-center gap-2"><label for="method"><u>M</u>ethod:</label><select id="method"><option>Orthogonal</option></select></div>
      <hr>
      <div class="d-flex flex-column row3">
        <div class="d-flex align-items-center gap-2"><label for="area">A<u>r</u>ea:</label><select id="area"><option>Solid</option></select></div>
        <div class="d-flex align-items-center gap-2"><label for="fill"><u>F</u>ill Type:</label><select id="fill"><option>None</option></select></div>
        <div class="d-flex align-items-center gap-2 position-relative"><label for="color" class="off">Fill Color:</label><select id="color" disabled><option>0</option></select><svg class="swatch position-absolute" width="11" height="10"><path d="M0 0h9L4 9H0z" fill="#555"/><path d="M4 9l2-4h5v3L7 10z" fill="#f4f4f4"/></svg></div>
      </div>
    </div>
  </main>
</section>

<footer>
  <div class="nav-bar d-flex">
    <div class="nav-part d-flex align-items-center pe-2">
      <span class="grip near me-1"></span>
      <button aria-label="Previous"><svg width="19" height="19" viewBox="0 0 19 19"><circle cx="9.500" cy="9.500" r="9" fill="#5cb52c" stroke="#469a1c"/><path d="M3 9.500 9 4v3.500h6v4H9V15z" fill="#fff"/></svg></button><i class="caret caret-lg mx-1"></i>
      <button class="near" aria-label="Next"><svg width="19" height="19" viewBox="0 0 19 19"><circle cx="9.500" cy="9.500" r="9" fill="#c4c4c4" stroke="#b0b0b0"/><path d="M16 9.500 10 4v3.500H4v4h6V15z" fill="#eee"/></svg></button><i class="caret caret-lg mx-1 opacity-50"></i>
      <button aria-label="Manage view groups"><svg width="20" height="16" viewBox="0 0 20 16"><path d="M1 6q9-3 18 0v5q-4 5-9 5-6 0-9-5z" fill="#8c969e"/><ellipse cx="10" cy="7" rx="9" ry="3.500" fill="#aab3ba" stroke="#78828a"/><path d="M2 1l10 6" stroke="#6e7a84" stroke-width="1.500"/></svg></button><i class="caret caret-lg mx-1"></i>
      <span class="position-relative d-flex align-items-center"><svg class="ic position-absolute near"><use href="#wins2"/></svg><select class="gray-select" aria-label="View group"><option>2D Metric Design</option></select></span>
      <span class="bar near3"></span><svg width="20" height="18"><use href="#tier"/></svg><span class="bar near3"></span>
      <div class="views d-flex"><button class="sel">1</button><button>2</button><button>3</button><button>4</button><button>5</button><button>6</button><button>7</button><button>8</button></div>
      <span class="grip near5"></span><label class="xy ms-1 near3" for="cx">X</label><input id="cx" value="13.436">
      <span class="bar ms-1 me-2"></span><label class="xy" for="cy">Y</label><input class="me-1" id="cy" value="-2.995">
    </div>
  </div>
  <div class="status d-flex align-items-center">
    <span class="prompt">Place Block &gt; Enter first point</span><span class="grip"></span><span class="bar near"></span>
    <svg class="ms-1" width="15" height="15" viewBox="0 0 15 15"><circle cx="7" cy="6.500" r="5.500" fill="#e9f0f8" stroke="#94a9c0"/><path d="M5 11l2 3 2-3" fill="#d3e1f0"/><path d="M7 5.500v4M7 2.500v2" stroke="#1c4f9c" stroke-width="2"/><path d="M11 3l2-2 2 2z"/></svg>
    <span class="bar my-1 bg-dark near"></span><span class="flex-grow-1 text-nowrap near">Line String, Level: Default</span>
    <span class="cell"><svg class="ic" viewBox="0 0 14 14"><path d="M1 12h8l3-9" fill="none" stroke="#48a6e4" stroke-width="1.200"/><circle cx="12" cy="2.500" r="1.500" fill="#fff" stroke="#2b84c4"/><circle cx="9" cy="11" r="1.500" fill="#fff" stroke="#2b84c4"/></svg></span>
    <span class="cell"><svg class="ic" viewBox="0 0 14 14"><path d="M4 6V4q0-3 3-3t3 3v2" fill="none" stroke="#888" stroke-width="1.500"/><path d="M1.500 6h11v6.500h-11z" fill="#b5a818" stroke="#776e12"/></svg></span>
    <span class="cell cell-level">Default</span>
    <span class="cell cell-wide"></span><span class="cell"></span><span class="cell"></span>
    <span class="cell"><svg class="ic"><use href="#floppy"/></svg></span>
    <span class="cell"><svg class="ic" viewBox="0 0 14 14"><path d="M3 1.500h9q2 2-1 3H9v6q2 2 0 2.500H2q-2-1-1-2.500h4V4H3Q0 3 3 1.500z" fill="#f3f3f3" stroke="#a5a5a5"/></svg></span>
    <span class="cell"><svg class="ic" viewBox="0 0 14 14"><rect x="3" y="3" width="7" height="7" rx="2" fill="#cfe8fb" stroke="#2b94dc"/><path d="M1 6.500h6M6.500 7v5" stroke="#2b94dc"/><path d="M6.500 1v5" stroke="#3a3"/><path d="M7 6.500h6" stroke="#d33"/></svg></span>
    <span class="cell"></span>
    <span class="cell"><svg class="ic" viewBox="0 0 14 14"><path d="M3 1h9.500v12H3z" fill="#1177c8"/><path d="M1.500 2.500H4M1.500 5H4M1.500 7.500H4M1.500 10H4M1.500 12H4" stroke="#0b5a9c"/></svg></span>
    <span class="cell"></span>
    <span class="cell"><svg class="ic" viewBox="0 0 14 14"><path d="M2 2l10 1v8l-8 2-2-1z" fill="#ddd" stroke="#bbb"/><path d="M4.500 4.500h5v5h-5z" fill="#eee" stroke="#999"/><circle cx="7" cy="7" r="1.500" fill="#aaa"/></svg></span>
    <span class="cell"><svg class="ic" viewBox="0 0 14 14"><circle cx="6" cy="6" r="5.500" fill="#2b94dc"/><path d="M1 4h10M1 8h10M6 .5v11" stroke="#d4ecfb" stroke-width=".8"/><ellipse cx="6" cy="6" rx="2.700" ry="5.500" fill="none" stroke="#d4ecfb" stroke-width=".8"/><path d="M7.500 7.500l6 6m0-6-6 6" stroke="#d62020" stroke-width="2"/></svg></span>
  </div>
  <div class="base"></div>
</footer>

<!-- tutorial callouts drawn over the window -->
<svg class="marks position-absolute" aria-hidden="true">
  <defs><filter id="sh" x="-5%" y="-10%" width="110%" height="125%"><feDropShadow dx="1" dy="2" stdDeviation="1.500" flood-opacity=".5"/></filter></defs>
  <g fill="none" stroke="#ff0f5c" stroke-width="3"><rect x="691" y="61.500" width="27.500" height="16" rx="4"/><rect x="566.500" y="447" width="339.500" height="181.500" rx="17"/><rect x="1268" y="209" width="139" height="27.500" rx="7"/></g>
  <g fill="#ff0f5c" filter="url(#sh)"><path d="M721 77.500 1247 214.700l.8-3L1258 222l-13.800 3.400.8-2.900L721 79z"/><path d="M1229.500 252.500 940.500 457.500l-2-2.500L930 470l17-3.500-2-3L1230.500 254z"/></g>
</svg>
</div>
<script src="https://cdn.jsdelivr.net/npm/bootstrap@5.3.0/dist/js/bootstrap.bundle.min.js"></script>
<script>
// grid of the view: dots every unit, lines every ten units, measured from the ACS origin
const origin = {x: 474, y: 344}, step = 31.8;
let dots = '', axes = '';
for (let i = -14; i < 90; i++) {
  const x = Math.round(origin.x + i * step);
  if (i % 10 === 0) axes += `M${x}.5 0V3000`;
  for (let j = -10; j < 60; j++) dots += `M${x} ${Math.round(origin.y + j * step)}h1v1h-1z`;
}
for (let j = -10; j < 60; j += 10) axes += `M0 ${Math.round(origin.y + j * step)}.5H5000`;
document.getElementById('dots').setAttribute('d', dots);
document.getElementById('axes').setAttribute('d', axes);
const cx = document.getElementById('cx');
cx.focus(); cx.setSelectionRange(6, 6);
</script>
</body>
</html>
